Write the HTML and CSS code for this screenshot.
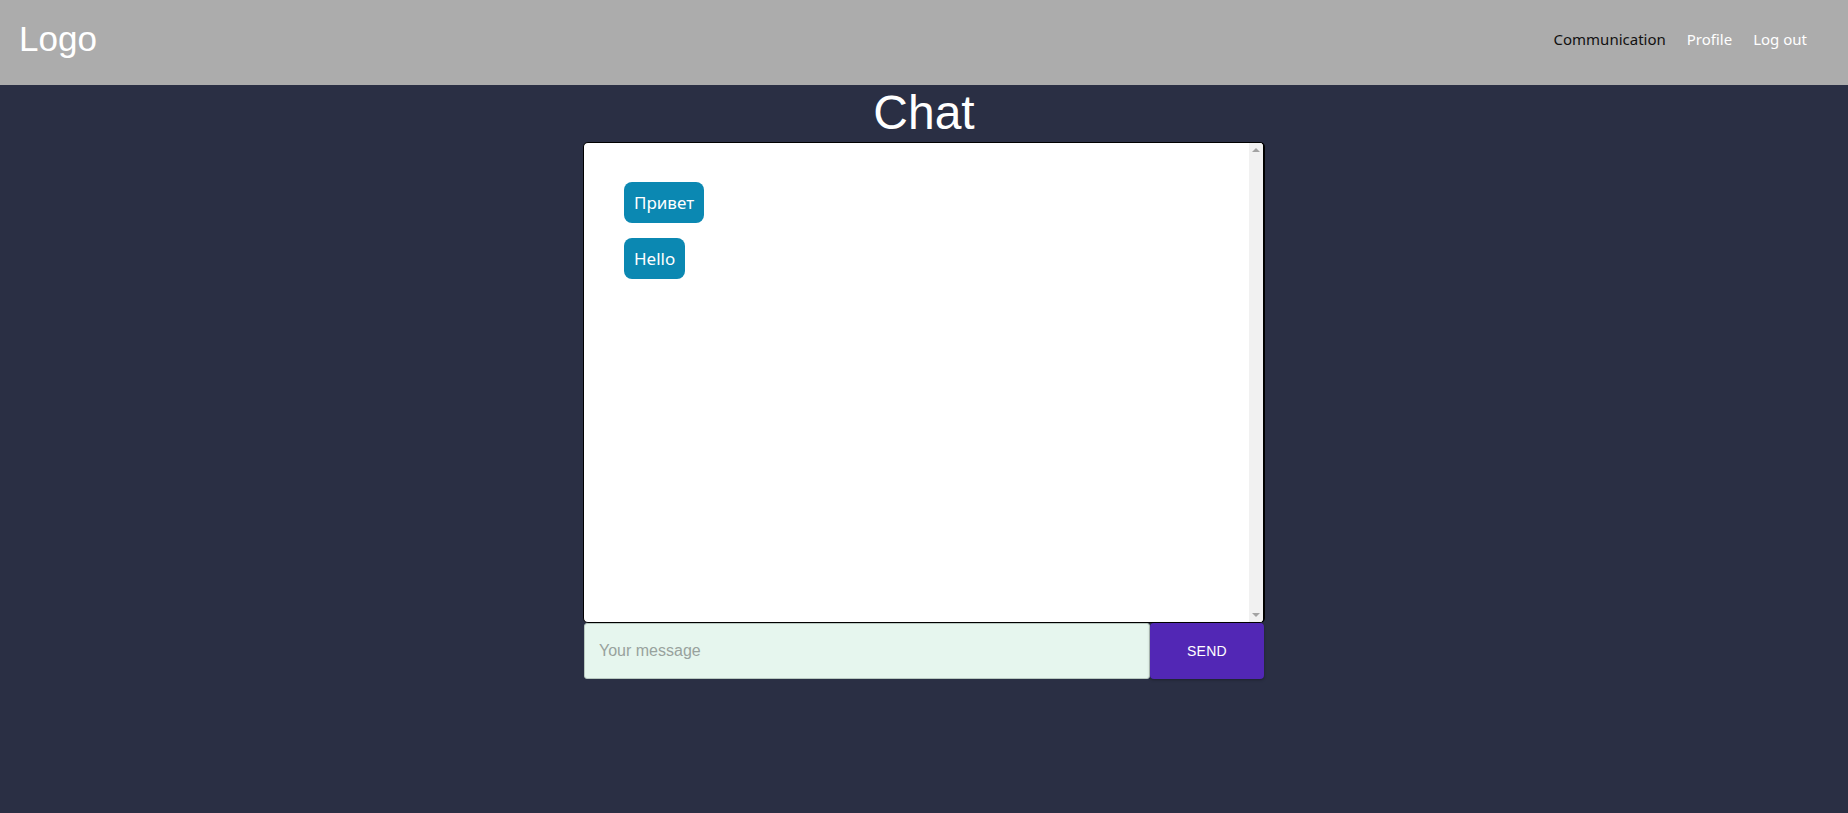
FILE: index.html
```html
<!DOCTYPE html>
<html lang="en">
<head>
<meta charset="utf-8">
<title>Chat</title>
<link rel="stylesheet" href="styles.css">
</head>
<body>
<header class="topbar">
  <div class="logo">Logo</div>
  <nav class="nav">
    <a class="nav-link active" href="#">Communication</a>
    <a class="nav-link" href="#">Profile</a>
    <a class="nav-link" href="#">Log out</a>
  </nav>
</header>
<main class="page">
  <h1 class="title">Chat</h1>
  <div class="chat-box">
    <div class="messages">
      <div class="bubble">Привет</div>
      <div class="bubble">Hello</div>
    </div>
    <div class="scroll-rail" aria-hidden="true">
      <span class="arrow arrow-up"></span>
      <span class="arrow arrow-down"></span>
    </div>
  </div>
  <form class="composer">
    <input class="composer-input" type="text" placeholder="Your message">
    <button class="send-btn" type="button">Send</button>
  </form>
</main>
</body>
</html>
```
FILE: styles.css
```css
html, body {
  margin: 0;
  padding: 0;
  height: 100%;
}
body {
  background: #2a2f44;
  font-family: "Liberation Sans", Arial, sans-serif;
}
.topbar {
  height: 85px;
  background: #acacac;
  display: flex;
  align-items: center;
  justify-content: space-between;
  padding: 0 41px 0 19px;
  box-sizing: border-box;
}
.logo {
  color: #fff;
  font-size: 35px;
  line-height: 1;
  margin-top: -8px;
}
.nav {
  display: flex;
  gap: 21px;
  margin-top: -7px;
}
.nav-link {
  font-family: "Noto Sans", "Open Sans", sans-serif;
  font-size: 15px;
  color: #fff;
  text-decoration: none;
}
.nav-link.active {
  color: #111;
}
.page {
  display: flex;
  flex-direction: column;
  align-items: center;
}
.title {
  margin: 4px 0 5px;
  font-size: 48px;
  line-height: 48px;
  font-weight: 400;
  color: #fff;
}
.chat-box {
  width: 682px;
  height: 481px;
  box-sizing: border-box;
  background: #fff;
  border: 1px solid #000;
  border-right-width: 2px;
  border-radius: 5px;
  overflow: hidden;
  display: flex;
}
.messages {
  flex: 1;
  overflow: hidden;
  padding: 39px 40px;
  display: flex;
  flex-direction: column;
  align-items: flex-start;
  gap: 15px;
}
.scroll-rail {
  width: 14px;
  background: #f1f1f1;
  display: flex;
  flex-direction: column;
  justify-content: space-between;
  align-items: center;
  padding: 5px 0;
}
.arrow {
  width: 0;
  height: 0;
  border-left: 4px solid transparent;
  border-right: 4px solid transparent;
}
.arrow-up {
  border-bottom: 4px solid #a3a3a3;
}
.arrow-down {
  border-top: 4px solid #a3a3a3;
}
.bubble {
  background: #0b88b2;
  color: #fff;
  font-family: "Noto Sans", "Open Sans", sans-serif;
  font-size: 17px;
  height: 41px;
  line-height: 41px;
  padding: 0 10px;
  border-radius: 8px;
}
.composer {
  display: flex;
  width: 680px;
  height: 56px;
  margin: 0;
}
.composer-input {
  flex: 1;
  min-width: 0;
  box-sizing: border-box;
  background: #e6f6ee;
  border: 1px solid #b8c8c0;
  border-radius: 3px;
  padding: 0 14px;
  font-family: "Liberation Sans", Arial, sans-serif;
  font-size: 16px;
  color: #333;
  outline: none;
}
.composer-input::placeholder {
  color: #98a29d;
}
.send-btn {
  width: 114px;
  border: none;
  border-radius: 4px;
  background: #5227b5;
  color: #fff;
  font-family: "Liberation Sans", Arial, sans-serif;
  font-size: 14px;
  text-transform: uppercase;
  letter-spacing: 0.3px;
  cursor: pointer;
  box-shadow: 0 1px 3px rgba(0,0,0,0.3);
}
```
